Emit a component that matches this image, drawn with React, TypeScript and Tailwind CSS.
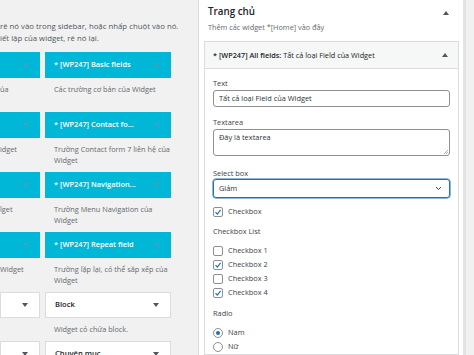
import React from "react";

const font = { fontFamily: '"Open Sans", "Noto Sans", sans-serif' };

function Tri({ up = false, cls = "" }: { up?: boolean; cls?: string }) {
  return (
    <svg width="6" height="4" viewBox="0 0 6 4" className={cls}>
      {up ? <polygon points="0,4 6,4 3,0" fill="currentColor" /> : <polygon points="0,0 6,0 3,4" fill="currentColor" />}
    </svg>
  );
}

function Cb({ checked }: { checked: boolean }) {
  return (
    <span className="w-[10px] h-[10px] rounded-[2px] border border-[#8c8f94] bg-white flex items-center justify-center shrink-0">
      {checked && (
        <svg width="8" height="8" viewBox="0 0 8 8">
          <path d="M1.5 4.2 L3.3 6 L6.6 1.8" stroke="#2271b1" strokeWidth="1.2" fill="none" />
        </svg>
      )}
    </span>
  );
}

function Radio({ checked }: { checked: boolean }) {
  return (
    <span className="w-[10px] h-[10px] rounded-full border border-[#8c8f94] bg-white flex items-center justify-center shrink-0">
      {checked && <span className="w-[4px] h-[4px] rounded-full bg-[#2271b1]" />}
    </span>
  );
}

function CyanBox({ title }: { title?: string }) {
  return (
    <div className="h-[26px] bg-[#00b7d8] flex items-center justify-between pl-[9px] pr-[11px]">
      <span className="text-white font-semibold text-[7.4px] whitespace-nowrap">{title}</span>
      <Tri cls="text-[#4d9db6]" />
    </div>
  );
}

function WhiteBox({ title }: { title?: string }) {
  return (
    <div className="h-[26px] bg-white border border-[#dcdcde] flex items-center justify-between pl-[9px] pr-[11px]">
      <span className="text-[#1d2327] font-semibold text-[7.6px] whitespace-nowrap">{title}</span>
      <Tri cls="text-[#50575e]" />
    </div>
  );
}

function Desc({ lines, h, left = false }: { lines: string[]; h: string; left?: boolean }) {
  return (
    <div className={`${h} pt-[6px] ${left ? "pl-0" : "pl-[9px]"} text-[7.3px] leading-[11px] text-[#646970] whitespace-nowrap overflow-hidden`}>
      {lines.map((l, i) => (
        <div key={i}>{l}</div>
      ))}
    </div>
  );
}

export default function App() {
  return (
    <div className="w-[474px] h-[355px] bg-[#f1f1f1] overflow-hidden flex" style={font}>
      {/* Left area */}
      <div className="w-[198px] shrink-0 pt-[20px] overflow-hidden">
        <div className="text-[7.8px] leading-[12px] text-[#50575e] whitespace-nowrap">
          <div>rê nó vào trong sidebar, hoặc nhấp chuột vào nó.</div>
          <div>iết lập của widget, rê nó lại.</div>
        </div>
        <div className="mt-[8px] grid grid-cols-[40px_126px] gap-x-[5px]">
          <div>
            <CyanBox />
            <Desc left lines={["ủa"]} h="h-[34px]" />
          </div>
          <div>
            <CyanBox title="* [WP247] Basic fields" />
            <Desc lines={["Các trường cơ bản của Widget"]} h="h-[34px]" />
          </div>
          <div>
            <CyanBox />
            <Desc left lines={["idget"]} h="h-[34px]" />
          </div>
          <div>
            <CyanBox title="* [WP247] Contact fo..." />
            <Desc lines={["Trường Contact form 7 liên hệ của", "Widget"]} h="h-[34px]" />
          </div>
          <div>
            <CyanBox />
            <Desc left lines={["lget"]} h="h-[34px]" />
          </div>
          <div>
            <CyanBox title="* [WP247] Navigation..." />
            <Desc lines={["Trường Menu Navigation của", "Widget"]} h="h-[34px]" />
          </div>
          <div>
            <CyanBox />
            <Desc left lines={["Widget"]} h="h-[34px]" />
          </div>
          <div>
            <CyanBox title="* [WP247] Repeat field" />
            <Desc lines={["Trường lặp lại, có thể sắp xếp của", "Widget"]} h="h-[34px]" />
          </div>
          <div>
            <WhiteBox />
            <Desc left lines={[""]} h="h-[23px]" />
          </div>
          <div>
            <WhiteBox title="Block" />
            <Desc lines={["Widget có chứa block."]} h="h-[23px]" />
          </div>
          <div>
            <WhiteBox />
          </div>
          <div>
            <WhiteBox title="Chuyên mục" />
          </div>
        </div>
      </div>

      {/* Right panel */}
      <div className="w-[265px] shrink-0 h-full bg-white border-l border-[#dcdcde] flex flex-col">
        <div className="h-[22px] flex items-center justify-between pl-[9px] pr-[14px] pt-[4px]">
          <span className="text-[9.8px] font-semibold text-[#1d2327]">Trang chủ</span>
          <Tri up cls="text-[#50575e]" />
        </div>
        <div className="pl-[9px] text-[7.3px] leading-[11px] text-[#646970] mt-[1px]">Thêm các widget *[Home] vào đây</div>
        <div className="ml-[5px] mr-[4px] mt-[8px] border border-[#dcdcde] flex-1 flex flex-col">
          <div className="h-[27px] bg-[#f6f7f7] border-b border-[#dcdcde] flex items-center justify-between pl-[8px] pr-[10px]">
            <span className="text-[7.3px] text-[#1d2327] whitespace-nowrap">
              <span className="font-semibold">* [WP247] All fields:</span> Tất cả loại Field của Widget
            </span>
            <Tri up cls="text-[#50575e]" />
          </div>
          <div className="px-[8px] text-[7.4px] text-[#3c434a]">
            <div className="mt-[9px] leading-[11px]">Text</div>
            <div className="mt-[1px] h-[17px] border border-[#8c8f94] rounded-[3px] flex items-center px-[5px] text-[#2c3338]">
              Tất cả loại Field của Widget
            </div>
            <div className="mt-[10px] leading-[11px]">Textarea</div>
            <div className="mt-[1px] h-[27px] border border-[#8c8f94] rounded-[3px] px-[5px] pt-[2px] leading-[11px] text-[#2c3338] relative">
              Đây là textarea
              <svg width="5" height="5" viewBox="0 0 5 5" className="absolute right-[1px] bottom-[1px]">
                <path d="M1 5 L5 1 M3 5 L5 3" stroke="#8c8f94" strokeWidth="0.7" />
              </svg>
            </div>
            <div className="mt-[12px] leading-[11px]">Select box</div>
            <div className="mt-[0px] h-[19px] border border-[#2271b1] rounded-[3px] flex items-center justify-between pl-[5px] pr-[7px] text-[#2c3338] shadow-[0_0_0_0.5px_#2271b1]">
              <span>Giảm</span>
              <svg width="7" height="5" viewBox="0 0 7 5">
                <path d="M1 1 L3.5 3.5 L6 1" stroke="#3c434a" strokeWidth="1" fill="none" />
              </svg>
            </div>
            <div className="mt-[9px] h-[10px] flex items-center gap-[5px]">
              <Cb checked />
              <span>Checkbox</span>
            </div>
            <div className="mt-[9px] leading-[11px]">Checkbox List</div>
            <div className="mt-[7px] flex flex-col">
              {[false, true, false, true].map((c, i) => (
                <div key={i} className="h-[14px] flex items-center gap-[5px]">
                  <Cb checked={c} />
                  <span>Checkbox {i + 1}</span>
                </div>
              ))}
            </div>
            <div className="mt-[8px] leading-[11px]">Radio</div>
            <div className="mt-[7px] flex flex-col">
              <div className="h-[14px] flex items-center gap-[5px]">
                <Radio checked />
                <span>Nam</span>
              </div>
              <div className="h-[14px] flex items-center gap-[5px]">
                <Radio checked={false} />
                <span>Nữ</span>
              </div>
            </div>
          </div>
        </div>
      </div>
      <div className="w-[3px] shrink-0 h-full bg-[#e2e4e7]" />
    </div>
  );
}
